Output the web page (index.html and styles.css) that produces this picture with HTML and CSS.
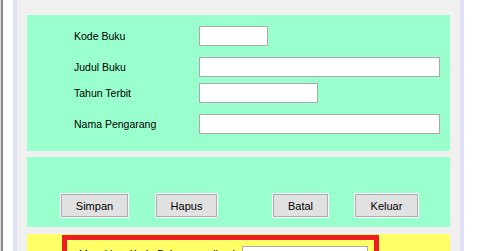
FILE: index.html
```html
<!DOCTYPE html>
<html lang="en">
<head>
    <meta charset="UTF-8">
    <title>Data Buku</title>
    <link rel="stylesheet" href="styles.css">
</head>
<body>
    <div class="edge"></div>
    <div class="gutter"></div>
    <div class="rail"></div>
    <div class="frame">
        <div class="panel form-panel">
            <div class="row">
                <label class="label">Kode Buku</label>
                <input class="field field-short" type="text">
            </div>
            <div class="row row-gap">
                <label class="label">Judul Buku</label>
                <input class="field field-long" type="text">
            </div>
            <div class="row row-tight">
                <label class="label">Tahun Terbit</label>
                <input class="field field-mid" type="text">
            </div>
            <div class="row row-gap">
                <label class="label">Nama Pengarang</label>
                <input class="field field-long" type="text">
            </div>
        </div>
        <div class="panel button-panel">
            <button class="btn btn-simpan">Simpan</button>
            <button class="btn btn-hapus">Hapus</button>
            <button class="btn btn-batal">Batal</button>
            <button class="btn btn-keluar">Keluar</button>
        </div>
        <div class="search-panel">
            <div class="search-box">
                <label class="search-label">Masukkan Kode Buku yang dicari :</label>
                <input class="field search-field" type="text">
            </div>
        </div>
    </div>
    <div class="rail"></div>
</body>
</html>
```

FILE: styles.css
```css
body {
    margin: 0;
    padding: 0;
    height: 251px;
    overflow: hidden;
    display: flex;
    background-color: #ffffff;
    font-family: "Liberation Sans", Arial, sans-serif;
    font-size: 10.5px;
    color: #000;
}
.edge {
    width: 2px;
    border-left: 1px solid #d8d8d8;
    background-color: #8a8a8a;
}
.gutter {
    width: 10px;
}
.rail {
    width: 4px;
    background-color: #e0e0fb;
}
.frame {
    width: 423px;
    background-color: #f0f0f0;
    padding: 15px 10px 0 10px;
    display: flex;
    flex-direction: column;
    overflow: hidden;
}
.frame > div {
    flex-shrink: 0;
}
.panel {
    background-color: #99ffcc;
}
.form-panel {
    height: 136px;
    box-sizing: border-box;
    padding: 11px 0 0 47px;
}
.row {
    display: flex;
    align-items: center;
}
.row-gap {
    margin-top: 11px;
}
.row-tight {
    margin-top: 6px;
}
.label {
    width: 125px;
}
.field {
    height: 20px;
    box-sizing: border-box;
    border: 1px solid #a9a9a9;
    background: #fff;
    margin: 0;
    padding: 0 3px;
    font: inherit;
}
.field-short {
    width: 69px;
}
.field-mid {
    width: 119px;
}
.field-long {
    width: 241px;
}
.button-panel {
    margin-top: 6px;
    height: 70px;
    box-sizing: border-box;
    padding: 37px 0 0 34px;
    display: flex;
    align-items: flex-start;
}
.btn {
    height: 23px;
    box-sizing: border-box;
    background-color: #e1e1e1;
    border: 1px solid #adadad;
    box-shadow: 0 0 0 1px #fdfdfd;
    font: inherit;
    font-size: 11px;
    color: #000;
    padding: 0;
}
.btn-simpan {
    width: 67px;
}
.btn-hapus {
    width: 61px;
    margin-left: 28px;
}
.btn-batal {
    width: 55px;
    margin-left: 56px;
}
.btn-keluar {
    width: 63px;
    margin-left: 27px;
}
.search-panel {
    margin-top: 7px;
    height: 60px;
    background-color: #ffff66;
    padding: 1px 0 0 35px;
}
.search-box {
    width: 317px;
    height: 60px;
    box-sizing: border-box;
    border: 5px solid #ed1c24;
    padding: 6px 0 0 12px;
    display: flex;
    align-items: flex-start;
}
.search-label {
    width: 163px;
    padding-top: 2px;
}
.search-field {
    width: 126px;
}
```
